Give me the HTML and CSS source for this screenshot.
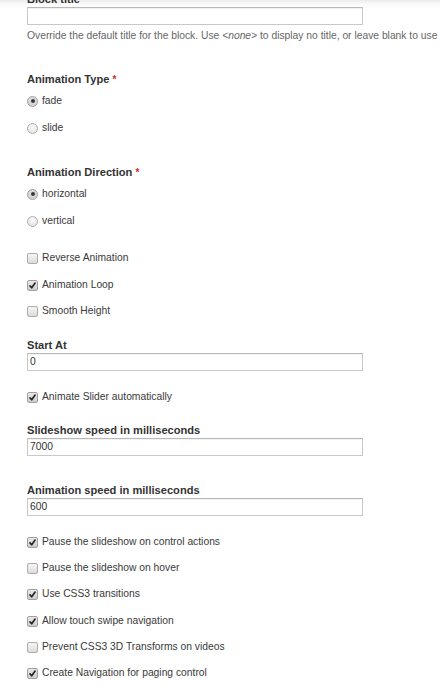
FILE: index.html
```html
<!DOCTYPE html>
<html>
<head>
<meta charset="utf-8">
<link rel="stylesheet" href="styles.css">
</head>
<body>
<form class="form">
  <div class="label lbl-block">Block title</div>
  <div class="field"></div>
  <div class="desc">Override the default title for the block. Use <em>&lt;none&gt;</em> to display no title, or leave blank to use</div>

  <div class="label m29">Animation Type <span class="req">*</span></div>
  <div class="opt m8"><span class="radio on"></span>fade</div>
  <div class="opt m13"><span class="radio"></span>slide</div>

  <div class="label m30">Animation Direction <span class="req">*</span></div>
  <div class="opt m8"><span class="radio on"></span>horizontal</div>
  <div class="opt m13"><span class="radio"></span>vertical</div>

  <div class="opt m23"><span class="cb"></span>Reverse Animation</div>
  <div class="opt m13"><span class="cb on"><svg viewBox="0 0 10 10"><path d="M2.2 5.4 L4.1 7.6 L7.9 2.3" /></svg></span>Animation Loop</div>
  <div class="opt m12"><span class="cb"></span>Smooth Height</div>

  <div class="label m20">Start At</div>
  <div class="field">0</div>

  <div class="opt m19"><span class="cb on"><svg viewBox="0 0 10 10"><path d="M2.2 5.4 L4.1 7.6 L7.9 2.3" /></svg></span>Animate Slider automatically</div>

  <div class="label m19">Slideshow speed in milliseconds</div>
  <div class="field">7000</div>

  <div class="label m27">Animation speed in milliseconds</div>
  <div class="field">600</div>

  <div class="opt m19"><span class="cb on"><svg viewBox="0 0 10 10"><path d="M2.2 5.4 L4.1 7.6 L7.9 2.3" /></svg></span>Pause the slideshow on control actions</div>
  <div class="opt m12"><span class="cb"></span>Pause the slideshow on hover</div>
  <div class="opt m12"><span class="cb on"><svg viewBox="0 0 10 10"><path d="M2.2 5.4 L4.1 7.6 L7.9 2.3" /></svg></span>Use CSS3 transitions</div>
  <div class="opt m13"><span class="cb on"><svg viewBox="0 0 10 10"><path d="M2.2 5.4 L4.1 7.6 L7.9 2.3" /></svg></span>Allow touch swipe navigation</div>
  <div class="opt m12"><span class="cb"></span>Prevent CSS3 3D Transforms on videos</div>
  <div class="opt m12"><span class="cb on"><svg viewBox="0 0 10 10"><path d="M2.2 5.4 L4.1 7.6 L7.9 2.3" /></svg></span>Create Navigation for paging control</div>
</form>
</body>
</html>
```
FILE: styles.css
```css
html, body {
  margin: 0;
  padding: 0;
  overflow: hidden;
}
body {
  width: 440px;
  height: 685px;
  background: linear-gradient(#ececec 0, #fafafa 4px, #ffffff 8px);
  font-family: "Liberation Sans", Arial, sans-serif;
  color: #333;
}
.form {
  display: flex;
  flex-direction: column;
  align-items: flex-start;
  padding-left: 27px;
}
.label {
  font-weight: bold;
  font-size: 11.1px;
  line-height: 14px;
  height: 14px;
  color: #333;
  white-space: nowrap;
}
.lbl-block {
  margin-top: -8px;
}
.req {
  color: #d22;
  font-size: 10px;
}
.field {
  box-sizing: border-box;
  width: 336px;
  height: 18px;
  margin-top: 1px;
  border: 1px solid #c8c8c8;
  border-top-color: #b8b8b8;
  box-shadow: inset 0 1px 1px rgba(0,0,0,0.06);
  background: #fff;
  font-size: 10.3px;
  line-height: 16px;
  padding-left: 2px;
  color: #333;
}
.desc {
  margin-top: 4px;
  font-size: 10.3px;
  line-height: 14px;
  height: 14px;
  color: #666;
  white-space: nowrap;
}
.desc em {
  font-style: italic;
}
.opt {
  display: flex;
  align-items: center;
  height: 14px;
  font-size: 10.3px;
  line-height: 14px;
  color: #3a3a3a;
  white-space: nowrap;
}
.radio {
  box-sizing: border-box;
  width: 11px;
  height: 11px;
  border-radius: 50%;
  border: 1px solid #b0b0b0;
  background: radial-gradient(circle at 50% 35%, #fbfbfb, #dedede);
  margin-right: 4px;
  display: flex;
  align-items: center;
  justify-content: center;
}
.radio.on {
  background: radial-gradient(circle at 50% 40%, #e6e6e6, #c9c9c9);
  border-color: #a0a0a0;
}
.radio.on::after {
  content: "";
  width: 4px;
  height: 4px;
  border-radius: 50%;
  background: #3a3a3a;
}
.cb {
  box-sizing: border-box;
  width: 11px;
  height: 11px;
  border-radius: 2px;
  border: 1px solid #acacac;
  background: linear-gradient(#f6f6f6, #dcdcdc);
  margin-right: 4px;
  display: flex;
  align-items: center;
  justify-content: center;
}
.cb.on {
  background: linear-gradient(#e8e8e8, #cdcdcd);
  border-color: #a0a0a0;
}
.cb svg {
  width: 9px;
  height: 9px;
}
.cb svg path {
  fill: none;
  stroke: #222;
  stroke-width: 1.8;
  stroke-linecap: round;
  stroke-linejoin: round;
}
.m8 { margin-top: 8px; }
.m12 { margin-top: 12px; }
.m13 { margin-top: 13px; }
.m19 { margin-top: 19px; }
.m20 { margin-top: 20px; }
.m23 { margin-top: 23px; }
.m27 { margin-top: 27px; }
.m29 { margin-top: 29px; }
.m30 { margin-top: 30px; }
```
